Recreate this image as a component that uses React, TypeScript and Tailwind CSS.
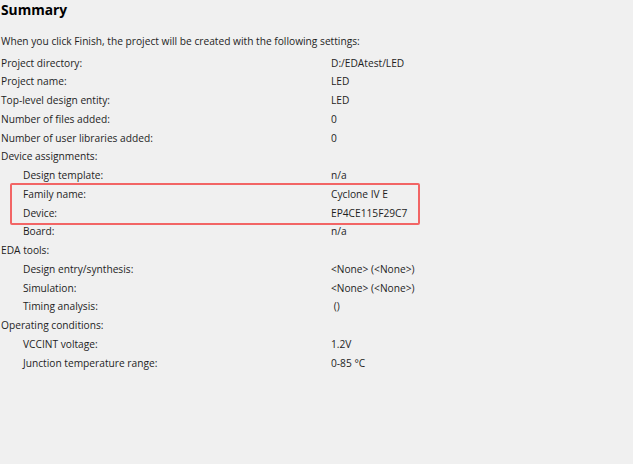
const rows: { label: string; value?: string; indent?: boolean }[] = [
  { label: 'Project directory:', value: 'D:/EDAtest/LED' },
  { label: 'Project name:', value: 'LED' },
  { label: 'Top-level design entity:', value: 'LED' },
  { label: 'Number of files added:', value: '0' },
  { label: 'Number of user libraries added:', value: '0' },
  { label: 'Device assignments:' },
  { label: 'Design template:', value: 'n/a', indent: true },
]

const boxed = [
  { label: 'Family name:', value: 'Cyclone IV E' },
  { label: 'Device:', value: 'EP4CE115F29C7' },
]

const rest: { label: string; value?: string; indent?: boolean }[] = [
  { label: 'Board:', value: 'n/a', indent: true },
  { label: 'EDA tools:' },
  { label: 'Design entry/synthesis:', value: '<None> (<None>)', indent: true },
  { label: 'Simulation:', value: '<None> (<None>)', indent: true },
  { label: 'Timing analysis:', value: ' ()', indent: true },
  { label: 'Operating conditions:' },
  { label: 'VCCINT voltage:', value: '1.2V', indent: true },
  { label: 'Junction temperature range:', value: '0-85 °C', indent: true },
]

function Row({ label, value, indent }: { label: string; value?: string; indent?: boolean }) {
  return (
    <div className="flex h-[18.75px] items-center">
      <div className={indent ? 'w-[331px] pl-[23px]' : 'w-[331px] pl-[1px]'}>{label}</div>
      <div className="whitespace-pre">{value}</div>
    </div>
  )
}

export default function App() {
  return (
    <div
      className="w-[633px] h-[464px] bg-[#f0f0f0] text-[#1e1e1e] text-[10.2px] overflow-hidden"
      style={{ fontFamily: '"Open Sans", "Noto Sans", sans-serif' }}
    >
      <div className="h-[20px] pl-[1px] flex items-center text-[13.8px] font-bold text-black">Summary</div>
      <div className="h-[34px] pl-[1px] pt-[9px] flex items-center">
        When you click Finish, the project will be created with the following settings:
      </div>
      <div>
        {rows.map((r) => (
          <Row key={r.label} {...r} />
        ))}
        <div className="ml-[10px] w-[410px] border-2 border-[#f26565] rounded-[2px] -my-[2px]">
          {boxed.map((r) => (
            <div key={r.label} className="flex h-[18.75px] items-center">
              <div className="w-[319px] pl-[11px]">{r.label}</div>
              <div>{r.value}</div>
            </div>
          ))}
        </div>
        {rest.map((r) => (
          <Row key={r.label} {...r} />
        ))}
      </div>
    </div>
  )
}
